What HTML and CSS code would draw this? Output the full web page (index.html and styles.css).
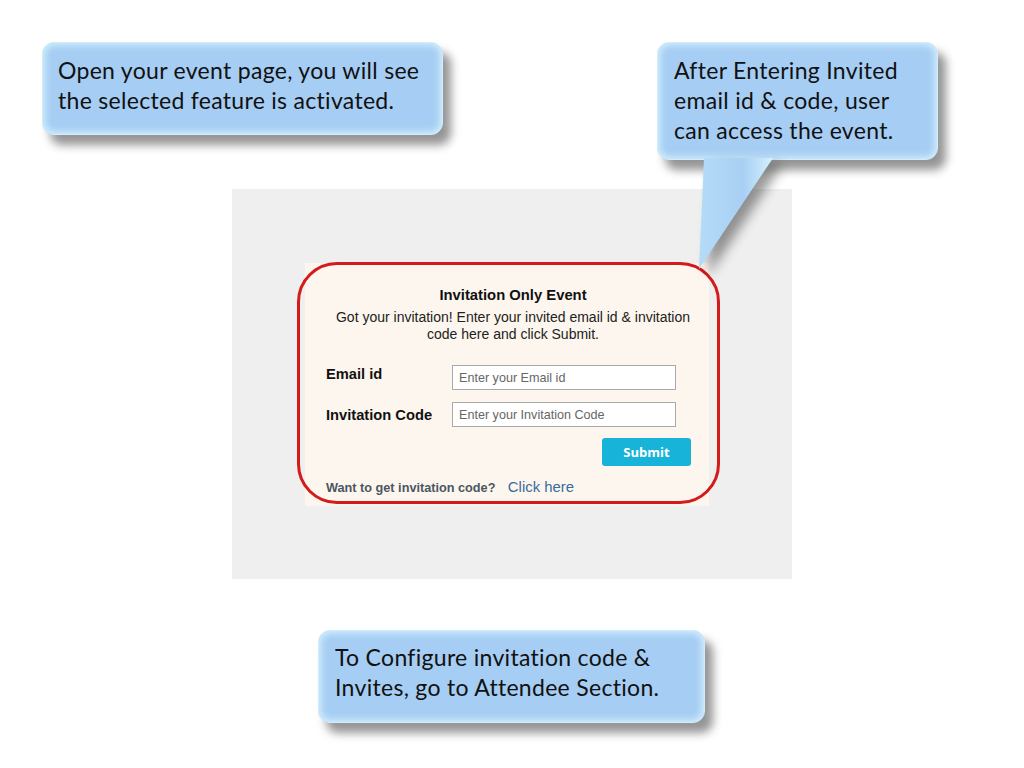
FILE: index.html
```html
<!DOCTYPE html>
<html lang="en">
<head>
    <meta charset="UTF-8">
    <meta name="viewport" content="width=device-width, initial-scale=1.0">
    <title>Invitation Only Event</title>
    <link rel="stylesheet" href="styles.css">
</head>
<body>
    <div class="slide">
        <div class="top-row">
            <div class="callout callout-left">
                Open your event page, you will see the selected feature is activated.
            </div>
            <div class="callout callout-right">
                After Entering Invited email id &amp; code, user can access the event.
                <svg class="callout-tail" width="90" height="120" viewBox="0 0 90 120">
                    <defs>
                        <linearGradient id="tailFill" x1="0" y1="0" x2="1" y2="0">
                            <stop offset="0" stop-color="#b4dbf7"/>
                            <stop offset="0.6" stop-color="#a9d0f4"/>
                            <stop offset="1" stop-color="#d4f2fc"/>
                        </linearGradient>
                    </defs>
                    <polygon points="6,0 75,0 1,111" fill="url(#tailFill)"/>
                </svg>
            </div>
        </div>

        <div class="event-panel">
            <div class="invite-card">
                <h1>Invitation Only Event</h1>
                <p class="invite-intro">Got your invitation! Enter your invited email id &amp; invitation code here and click Submit.</p>

                <div class="field-row">
                    <label for="emailId">Email id</label>
                    <input type="text" id="emailId" placeholder="Enter your Email id">
                </div>
                <div class="field-row">
                    <label for="inviteCode">Invitation Code</label>
                    <input type="text" id="inviteCode" placeholder="Enter your Invitation Code">
                </div>

                <div class="submit-row">
                    <button type="button">Submit</button>
                </div>

                <div class="invite-footer">
                    <span>Want to get invitation code?</span>
                    <a href="#">Click here</a>
                </div>
            </div>
        </div>

        <div class="callout callout-bottom">
            To Configure invitation code &amp; Invites, go to Attendee Section.
        </div>
    </div>
</body>
</html>
```

FILE: styles.css
```css
* { margin: 0; padding: 0; box-sizing: border-box; }
body { background: #fff; font-family: "Liberation Sans", Arial, sans-serif; color: #111; }
.slide { width: 1024px; height: 768px; padding-top: 42px; overflow: hidden; }

/* Blue note boxes */
.top-row { display: flex; align-items: flex-start; }
.callout { position: relative; z-index: 2; background: #a6cdf3; border: 1px solid #d3ecfb; border-radius: 12px; box-shadow: inset 0 0 7px 2px #d4f1fd, 8px 10px 10px rgba(0, 0, 0, 0.42); font-family: Lato, "Open Sans", sans-serif; font-size: 23px; letter-spacing: 0.3px; line-height: 30px; color: #111; font-variant-ligatures: none; }
.callout-left { width: 401px; height: 93px; margin-left: 42px; padding: 12px 10px 0 15px; }
.callout-right { width: 281px; height: 118px; margin-left: auto; margin-right: 86px; padding: 12px 24px 0 16px; }
.callout-bottom { width: 387px; height: 93px; margin: 51px 0 0 318px; padding: 11px 10px 0 16px; }
.callout-tail { position: absolute; left: 40px; top: 115px; filter: drop-shadow(9px 7px 6px rgba(0, 0, 0, 0.4)); }

/* Event page preview */
.event-panel { width: 560px; height: 390px; margin: 29px 0 0 232px; background: #eeefee; padding: 74px 0 0 73px; }
.invite-card { position: relative; width: 404px; height: 243px; background: #fdf6ee; padding: 24px 9px 9px 21px; }
.invite-card::after { content: ""; position: absolute; left: -8px; right: -11px; top: -1px; bottom: 2px; border: 3px solid #d41a1a; border-radius: 40px; }
.invite-card h1 { font-size: 14.8px; line-height: 17px; font-weight: bold; text-align: center; color: #111; }
.invite-intro { margin-top: 5px; font-size: 14px; line-height: 17px; text-align: center; color: #222; }
.field-row { display: flex; align-items: center; margin-top: 12px; }
.invite-intro + .field-row { margin-top: 22px; }
.field-row label { width: 126px; font-size: 14.7px; font-weight: bold; color: #111; }
.field-row:first-of-type label { margin-top: -7px; }
.field-row input { width: 224px; height: 25px; border: 1px solid #a9a9a9; background: #fff; padding: 0 6px; font-family: "Liberation Sans", Arial, sans-serif; font-size: 12.6px; }
.field-row input::placeholder { color: #666; }
.submit-row { display: flex; justify-content: flex-end; margin-top: 11px; padding-right: 9px; }
.submit-row button { width: 89px; height: 28px; border: none; border-radius: 3px; background: #18b3d9; color: #fff; font-family: "Open Sans", sans-serif; font-size: 13px; font-weight: bold; }
.invite-footer { margin-top: 12px; line-height: 18px; }
.invite-footer span { font-size: 12.7px; font-weight: bold; color: #4b5662; margin-right: 8px; }
.invite-footer a { font-size: 14.9px; color: #3a6c9e; text-decoration: none; }
```
